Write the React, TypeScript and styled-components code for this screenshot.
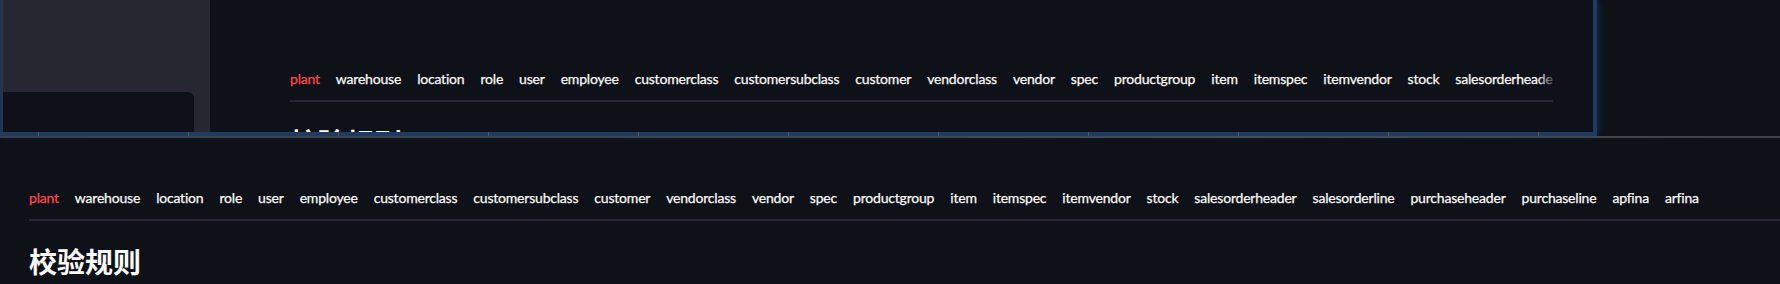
import React from 'react';
import styled, { createGlobalStyle } from 'styled-components';

const GlobalStyle = createGlobalStyle`
  html, body {
    margin: 0;
    padding: 0;
    background: #0e1117;
    overflow: hidden;
  }
`;

const tabs = [
  'plant', 'warehouse', 'location', 'role', 'user', 'employee', 'customerclass',
  'customersubclass', 'customer', 'vendorclass', 'vendor', 'spec', 'productgroup',
  'item', 'itemspec', 'itemvendor', 'stock', 'salesorderheader', 'salesorderline',
  'purchaseheader', 'purchaseline', 'apfina', 'arfina',
];

const Page = styled.div`
  width: 1780px;
  height: 284px;
  display: flex;
  flex-direction: column;
  background: #0e1117;
  font-family: Lato, "Noto Sans", "Noto Sans CJK SC", sans-serif;
  color: #fafafa;
  overflow: hidden;
`;

const Shot = styled.div`
  display: flex;
  height: 136px;
  flex-shrink: 0;
`;

const Window = styled.div`
  width: 1597px;
  display: flex;
  flex-direction: column;
  box-shadow: 2px 0 6px rgba(40, 90, 160, 0.35);
`;

const WindowBody = styled.div`
  height: 132px;
  display: flex;
  border-left: 3px solid #1d3658;
  border-right: 4px solid #1c3b66;
  overflow: hidden;
`;

// taskbar strip of the captured window, with its small separators
const Taskbar = styled.div`
  height: 4px;
  background: repeating-linear-gradient(
    90deg,
    #1f3b60 0 38px,
    #4d5a6c 38px 39px,
    #1f3b60 39px 150px
  );
`;

const Rule = styled.div`
  height: 2px;
  flex-shrink: 0;
  background: linear-gradient(90deg, #3a3e46, #454950 70%, #3e4148);
`;

const EdgeMarks = styled.div`
  position: absolute;
  left: -3px;
  top: 0;
  width: 3px;
  height: 92px;
  background:
    linear-gradient(#8fb8ff, #8fb8ff) 0 22px / 2px 11px no-repeat,
    linear-gradient(#dfe8f5, #dfe8f5) 1px 71px / 2px 2px no-repeat,
    linear-gradient(#3e5573, #3e5573) 0 10px / 3px 1px no-repeat,
    linear-gradient(#3e5573, #3e5573) 0 44px / 3px 1px no-repeat;
`;

const Sidebar = styled.div`
  position: relative;
  width: 207px;
  flex-shrink: 0;
  background: #262730;
  display: flex;
  flex-direction: column;
  justify-content: flex-end;
`;

const SideBox = styled.div`
  width: 191px;
  height: 40px;
  background: #0e1117;
  border-top-right-radius: 6px;
`;

const Content = styled.div<{ $pad: string }>`
  flex: 1;
  min-width: 0;
  padding: ${p => p.$pad};
  display: flex;
  flex-direction: column;
`;

const TabList = styled.div<{ $fade?: boolean }>`
  position: relative;
  display: flex;
  gap: 16px;
  height: 40px;
  border-bottom: 2px solid #262730;
  overflow: hidden;
  flex-shrink: 0;

  &::after {
    content: '';
    display: ${p => (p.$fade ? 'block' : 'none')};
    position: absolute;
    right: 0;
    top: 0;
    bottom: 0;
    width: 16px;
    background: linear-gradient(90deg, rgba(14, 17, 23, 0), rgba(14, 17, 23, 0.75));
  }
`;

const Tab = styled.div<{ $active?: boolean }>`
  position: relative;
  flex-shrink: 0;
  display: flex;
  align-items: center;
  padding-bottom: 4px;
  font-size: 14px;
  letter-spacing: -0.2px;
  -webkit-text-stroke: 0.25px currentColor;
  white-space: nowrap;
  color: ${p => (p.$active ? '#ff4b4b' : '#fafafa')};

  &::after {
    content: '';
    display: ${p => (p.$active ? 'block' : 'none')};
    position: absolute;
    left: 0;
    right: 0;
    bottom: -2px;
    height: 2px;
    background: #ff4b4b;
  }
`;

const Heading = styled.h2`
  margin: 20px 0 0;
  font-family: "Noto Sans CJK SC", "Noto Sans", sans-serif;
  font-size: 28px;
  font-weight: 700;
  line-height: 40px;
  color: #fafafa;
`;

const Tabs = ({ fade }: { fade?: boolean }) => (
  <TabList $fade={fade}>
    {tabs.map((t, i) => (
      <Tab key={t} $active={i === 0}>{t}</Tab>
    ))}
  </TabList>
);

export default function App() {
  return (
    <>
      <GlobalStyle />
      <Page>
        <Shot>
          <Window>
            <WindowBody>
              <Sidebar>
                <EdgeMarks />
                <SideBox />
              </Sidebar>
              <Content $pad="60px 40px 0 80px">
                <Tabs fade />
                <Heading>校验规则</Heading>
              </Content>
            </WindowBody>
            <Taskbar />
          </Window>
        </Shot>
        <Rule />
        <Content $pad="41px 0 0 29px">
          <Tabs />
          <Heading>校验规则</Heading>
        </Content>
      </Page>
    </>
  );
}
